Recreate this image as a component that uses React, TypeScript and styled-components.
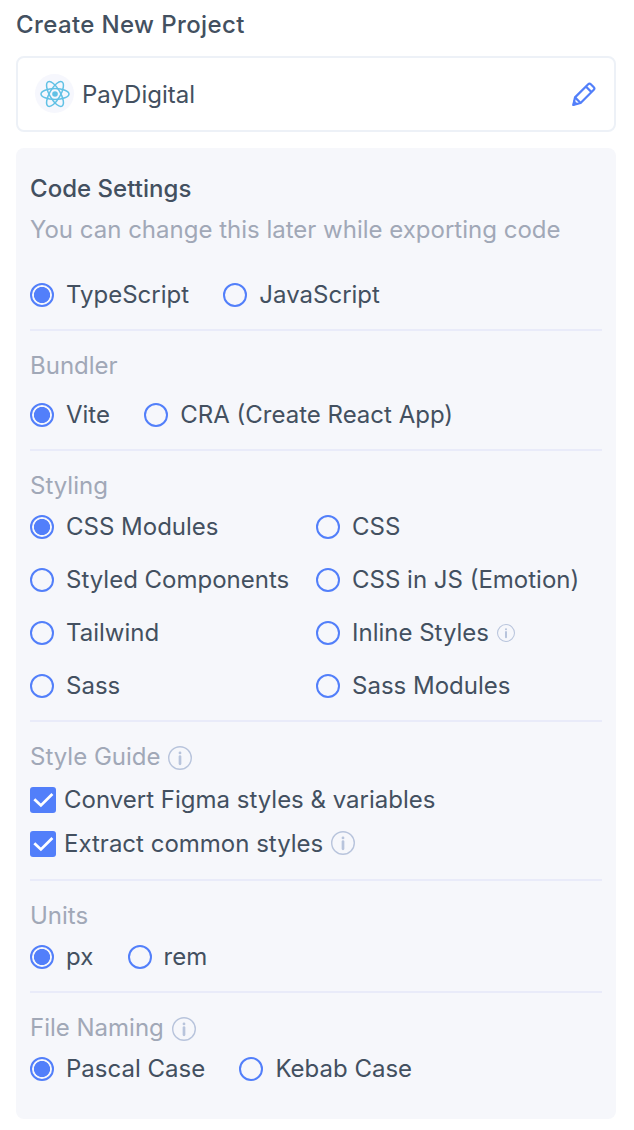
import React, { useState } from "react";
import styled, { createGlobalStyle } from "styled-components";

const GlobalStyle = createGlobalStyle`
  * { box-sizing: border-box; }
  body {
    margin: 0;
    background: #ffffff;
    color: #435060;
    font-family: Inter, "Liberation Sans", sans-serif;
    font-size: 24px;
    -webkit-font-smoothing: antialiased;
  }
`;

const Page = styled.main`
  padding: 10px 18px 11px 16px;
`;

const Title = styled.h1`
  margin: 0 0 16px;
  font-size: 24px;
  line-height: 30px;
  font-weight: 500;
  letter-spacing: 0.38px;
`;

const ProjectCard = styled.div`
  display: flex;
  align-items: center;
  height: 76px;
  padding: 0 17px;
  border: 2px solid #edf1f7;
  border-radius: 8px;
`;

const Avatar = styled.span`
  display: flex;
  align-items: center;
  justify-content: center;
  width: 39px;
  height: 39px;
  margin: 0 8px 1px 0;
  border-radius: 50%;
  background: #f6f7fd;
`;

const ProjectName = styled.span`
  flex: 1;
  padding-top: 2px;
  line-height: 30px;
`;

const EditButton = styled.button`
  display: flex;
  padding: 0;
  border: 0;
  background: none;
  cursor: pointer;
`;

const Panel = styled.section`
  margin-top: 16px;
  padding: 26px 14px 16px;
  border-radius: 8px;
  background: #f6f7fb;
`;

const PanelTitle = styled.h2`
  margin: 0;
  font-size: 24px;
  line-height: 30px;
  font-weight: 500;
  letter-spacing: 0.03px;
`;

const Hint = styled.p`
  margin: 11px 0 38px;
  line-height: 30px;
  color: #a1a8b7;
`;

const Group = styled.div`
  padding-bottom: 22px;

  & + & {
    padding-top: 20px;
    border-top: 2px solid #e9ebf9;
  }
`;

const GroupLabel = styled.div<{ $gap?: number }>`
  display: flex;
  align-items: center;
  gap: 8px;
  height: 30px;
  margin-bottom: ${(p) => p.$gap ?? 14}px;
  color: #a1a8b7;

  svg {
    margin-top: 2px;
  }
`;

const OptionRow = styled.div`
  display: flex;
  gap: 34.3px;
`;

const OptionGrid = styled.div`
  display: grid;
  grid-template-columns: 286px 286px;
  row-gap: 29px;
`;

const CheckList = styled.div`
  display: grid;
  row-gap: 18px;
`;

const Option = styled.label<{ $tight?: boolean }>`
  display: flex;
  align-items: center;
  gap: ${(p) => (p.$tight ? 8 : 12)}px;
  height: ${(p) => (p.$tight ? 26 : 24)}px;
  white-space: nowrap;
  cursor: pointer;
`;

const Radio = styled.input`
  appearance: none;
  flex: none;
  width: 24px;
  height: 24px;
  margin: 0;
  border: 2px solid #527ffa;
  border-radius: 50%;

  &:checked {
    background: radial-gradient(circle, #527ffa 7.7px, transparent 8.4px);
  }
`;

const HiddenCheckbox = styled.input`
  position: absolute;
  opacity: 0;
`;

const CheckBox = styled.span<{ $on: boolean }>`
  flex: none;
  display: flex;
  width: 26px;
  height: 26px;
  border-radius: 3px;
  background: ${(p) => (p.$on ? "#527ffa" : "#ffffff")};
`;

const Caption = styled.span`
  display: block;
  line-height: 30px;
`;

const WithInfo = styled.span<{ $raised?: boolean }>`
  display: flex;
  align-items: center;
  gap: 8px;

  svg {
    margin-bottom: ${(p) => (p.$raised ? 2 : 0)}px;
  }
`;

function InfoIcon({ size = 24 }: { size?: number }) {
  return (
    <svg width={size} height={size} viewBox="0 0 24 24" fill="none">
      <circle cx="12" cy="12" r="11.3" stroke="#b8c4dc" strokeWidth="1.4" />
      <circle cx="12" cy="6.9" r="1.4" fill="#b8c4dc" />
      <path d="M12 10.6v7.2" stroke="#b8c4dc" strokeWidth="2.7" strokeLinecap="round" />
    </svg>
  );
}

function ReactLogo() {
  return (
    <svg width="30" height="30" viewBox="-15 -15 30 30" fill="none" stroke="#61c1e5" strokeWidth="1.5">
      <circle r="2.8" fill="#61c1e5" stroke="none" />
      <ellipse rx="14" ry="5.4" />
      <ellipse rx="14" ry="5.4" transform="rotate(60)" />
      <ellipse rx="14" ry="5.4" transform="rotate(120)" />
    </svg>
  );
}

function PencilIcon() {
  return (
    <svg width="26" height="26" viewBox="0 0 26 26" fill="none" stroke="#527ffa" strokeWidth="2.2" strokeLinejoin="round">
      <path d="M2.3 23.9 4 16.4 17.2 3.2Q18.5 1.9 19.8 3.2L22.8 6.2Q24.1 7.5 22.8 8.8L9.6 22Z" />
      <path d="M14.9 5.5 20.5 11.1M4 16.4 9.6 22" />
      <path d="M2 24.2 3 19.6 6.4 23Z" fill="#527ffa" strokeWidth="1" />
    </svg>
  );
}

type ChoiceProps = {
  name: string;
  options: string[];
  grid?: boolean;
  info?: string;
};

function Choice({ name, options, grid, info }: ChoiceProps) {
  const [value, setValue] = useState(options[0]);
  const Container = grid ? OptionGrid : OptionRow;
  return (
    <Container>
      {options.map((o) => (
        <Option key={o}>
          <Radio type="radio" name={name} checked={value === o} onChange={() => setValue(o)} />
          {o === info ? (
            <WithInfo>
              <Caption>{o}</Caption>
              <InfoIcon size={18} />
            </WithInfo>
          ) : (
            <Caption>{o}</Caption>
          )}
        </Option>
      ))}
    </Container>
  );
}

function Check({ label, info }: { label: string; info?: boolean }) {
  const [on, setOn] = useState(true);
  return (
    <Option $tight>
      <HiddenCheckbox type="checkbox" checked={on} onChange={() => setOn(!on)} />
      <CheckBox $on={on}>
        <svg width="26" height="26" viewBox="0 0 26 26" fill="none">
          <path d="M4.3 12.2 10.9 18.4 22.4 6.9" stroke="#fff" strokeWidth="2.8" />
        </svg>
      </CheckBox>
      <WithInfo $raised>
        <Caption>{label}</Caption>
        {info && <InfoIcon />}
      </WithInfo>
    </Option>
  );
}

export default function App() {
  return (
    <Page>
      <GlobalStyle />
      <Title>Create New Project</Title>
      <ProjectCard>
        <Avatar>
          <ReactLogo />
        </Avatar>
        <ProjectName>PayDigital</ProjectName>
        <EditButton aria-label="Edit">
          <PencilIcon />
        </EditButton>
      </ProjectCard>
      <Panel>
        <PanelTitle>Code Settings</PanelTitle>
        <Hint>You can change this later while exporting code</Hint>
        <Group>
          <Choice name="language" options={["TypeScript", "JavaScript"]} />
        </Group>
        <Group>
          <GroupLabel $gap={22}>
            <Caption>Bundler</Caption>
          </GroupLabel>
          <Choice name="bundler" options={["Vite", "CRA (Create React App)"]} />
        </Group>
        <Group>
          <GroupLabel>
            <Caption>Styling</Caption>
          </GroupLabel>
          <Choice
            grid
            name="styling"
            info="Inline Styles"
            options={[
              "CSS Modules",
              "CSS",
              "Styled Components",
              "CSS in JS (Emotion)",
              "Tailwind",
              "Inline Styles",
              "Sass",
              "Sass Modules",
            ]}
          />
        </Group>
        <Group>
          <GroupLabel $gap={15}>
            <Caption>Style Guide</Caption>
            <InfoIcon />
          </GroupLabel>
          <CheckList>
            <Check label="Convert Figma styles &amp; variables" />
            <Check label="Extract common styles" info />
          </CheckList>
        </Group>
        <Group>
          <GroupLabel>
            <Caption>Units</Caption>
          </GroupLabel>
          <Choice name="units" options={["px", "rem"]} />
        </Group>
        <Group>
          <GroupLabel>
            <Caption>File Naming</Caption>
            <InfoIcon />
          </GroupLabel>
          <Choice name="naming" options={["Pascal Case", "Kebab Case"]} />
        </Group>
      </Panel>
    </Page>
  );
}
